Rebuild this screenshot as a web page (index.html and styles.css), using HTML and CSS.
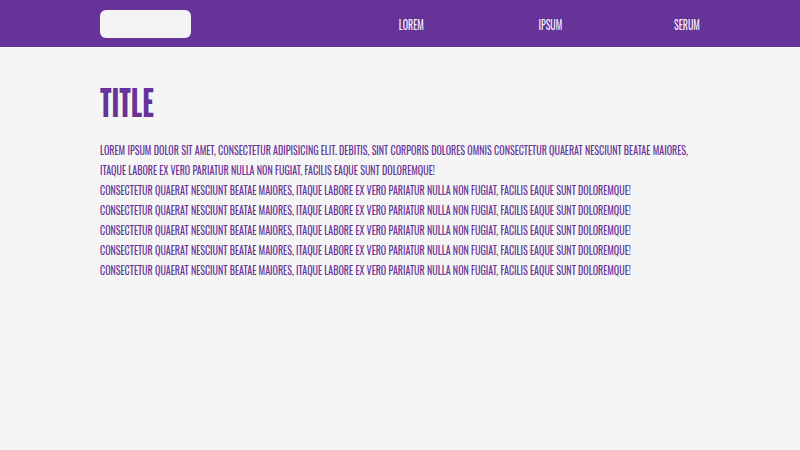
FILE: index.html
```html
<!DOCTYPE html>
<html lang="en">
<head>
  <meta charset="UTF-8">
  <meta name="viewport" content="width=device-width, initial-scale=1.0">
  <title>Title</title>
  <link rel="stylesheet" href="styles.css">
</head>
<body>
  <header class="header">
    <div class="container header-inner">
      <div class="logo"></div>
      <ul class="nav">
        <li><a href="#">Lorem</a></li>
        <li><a href="#">Ipsum</a></li>
        <li><a href="#">Serum</a></li>
      </ul>
    </div>
  </header>

  <main class="container content">
    <h1 class="title"><span>Title</span></h1>
    <div class="text">
      <p>Lorem ipsum dolor sit amet, consectetur adipisicing elit. Debitis, sint corporis dolores omnis consectetur quaerat nesciunt beatae maiores, itaque labore ex vero pariatur nulla non fugiat, facilis eaque sunt doloremque!</p>
      <p>Consectetur quaerat nesciunt beatae maiores, itaque labore ex vero pariatur nulla non fugiat, facilis eaque sunt doloremque!</p>
      <p>Consectetur quaerat nesciunt beatae maiores, itaque labore ex vero pariatur nulla non fugiat, facilis eaque sunt doloremque!</p>
      <p>Consectetur quaerat nesciunt beatae maiores, itaque labore ex vero pariatur nulla non fugiat, facilis eaque sunt doloremque!</p>
      <p>Consectetur quaerat nesciunt beatae maiores, itaque labore ex vero pariatur nulla non fugiat, facilis eaque sunt doloremque!</p>
      <p>Consectetur quaerat nesciunt beatae maiores, itaque labore ex vero pariatur nulla non fugiat, facilis eaque sunt doloremque!</p>
    </div>
  </main>
</body>
</html>
```

FILE: styles.css
```css
/* base */
body {
  margin: 0;
  padding: 0;
  background: #f5f5f5;
  font-family: "Oswald", "Liberation Sans Narrow", "DejaVu Sans Condensed", sans-serif;
  color: #663399;
  text-transform: uppercase;
}
ul {
  margin: 0;
  padding: 0;
  list-style: none;
}
a {
  color: inherit;
  text-decoration: none;
}

.container {
  width: 600px;
  margin: 0 auto;
}

/* header */
.header {
  height: 47px;
  background: #663399;
}
.header-inner {
  height: 100%;
  display: flex;
  justify-content: space-between;
  align-items: center;
}
.logo {
  width: 91px;
  height: 28px;
  margin-top: 1px;
  border-radius: 6px;
  background: #f5f4f5;
}
.nav {
  display: flex;
}
.nav li {
  width: 138px;
  text-align: right;
  font-size: 13px;
  color: #f5f0f8;
}
.nav a {
  display: inline-block;
  transform: scaleX(0.76);
  transform-origin: right center;
}

/* content */
.content {
  padding-top: 34px;
}
.title {
  margin: 0 0 19px;
  font-size: 35px;
  line-height: 40px;
  font-weight: bold;
}
.title span {
  display: inline-block;
  transform: scaleX(0.74);
  transform-origin: left center;
}
.text {
  width: 720px;
  transform: scaleX(0.833);
  transform-origin: left top;
}
.text p {
  margin: 0;
  font-size: 12px;
  line-height: 20px;
}
```
